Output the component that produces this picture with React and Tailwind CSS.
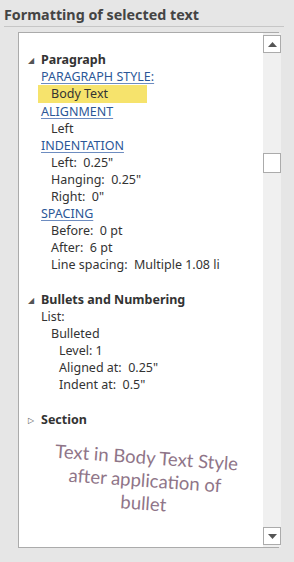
import React from "react";

const L = ({ children }) => (
  <div className="h-[17px] leading-[17px] text-[#2b5797] underline underline-offset-2 decoration-[#6d8cc0]">{children}</div>
);
const T = ({ children, cls = "" }) => (
  <div className={"h-[17px] leading-[17px] whitespace-pre " + cls}>{children}</div>
);
const H = ({ open = true, children }) => (
  <div className="h-[17px] leading-[17px] flex items-center -ml-[13px]">
    <span className="w-[13px] text-[8px] text-[#555] leading-none">{open ? "◢" : "▷"}</span>
    <span className="font-bold text-[#333] text-[12.5px]">{children}</span>
  </div>
);

export default function App() {
  return (
    <div className="w-[294px] h-[562px] bg-[#e6e6e6] overflow-hidden" style={{ fontFamily: '"Noto Sans", "Open Sans", sans-serif' }}>
      <div className="pl-[4px] pt-[5px] w-[284px]">
        <div className="text-[14.3px] font-bold text-[#444] leading-[20px]">Formatting of selected text</div>
        <div className="mt-[1px] h-px bg-[#c6c6c6]" />
      </div>
      <div className="ml-[18px] mt-[5px] w-[261px] h-[516px] border border-[#ababab] bg-white flex">
        <div className="flex-1 pl-[22px] pt-[18px] text-[12.5px] text-[#333]">
          <H>Paragraph</H>
          <L>PARAGRAPH STYLE:</L>
          <div className="-ml-[3px] w-[109px] h-[18px] leading-[18px] bg-[#f6e36c] pl-[13px]">Body Text</div>
          <L>ALIGNMENT</L>
          <T cls="pl-[10px]">Left</T>
          <L>INDENTATION</L>
          <T cls="pl-[10px]">Left:  0.25"</T>
          <T cls="pl-[10px]">Hanging:  0.25"</T>
          <T cls="pl-[10px]">Right:  0"</T>
          <L>SPACING</L>
          <T cls="pl-[10px]">Before:  0 pt</T>
          <T cls="pl-[10px]">After:  6 pt</T>
          <T cls="pl-[10px]">Line spacing:  Multiple 1.08 li</T>
          <div className="h-[18px]" />
          <H>Bullets and Numbering</H>
          <T>List:</T>
          <T cls="pl-[10px]">Bulleted</T>
          <T cls="pl-[18px]">Level: 1</T>
          <T cls="pl-[18px]">Aligned at:  0.25"</T>
          <T cls="pl-[18px]">Indent at:  0.5"</T>
          <div className="h-[18px]" />
          <H open={false}>Section</H>
          <div className="mt-[18px] -ml-[14px] w-[236px] text-center text-[18.5px] leading-[23px] text-[#8f7588] rotate-[4deg]" style={{ fontFamily: 'Lato, "Noto Sans", sans-serif' }}>
            Text in Body Text Style<br />after application of<br />bullet
          </div>
        </div>
        <div className="w-[20px] bg-[#f0f0f0] flex flex-col items-center py-[2px]">
          <div className="w-[18px] h-[18px] border border-[#ababab] bg-white flex items-center justify-center">
            <svg width="9" height="5" viewBox="0 0 9 5"><path d="M0 5 L4.5 0 L9 5 Z" fill="#555" /></svg>
          </div>
          <div className="h-[100px]" />
          <div className="w-[18px] h-[20px] border border-[#ababab] bg-white" />
          <div className="flex-1" />
          <div className="w-[18px] h-[18px] border border-[#ababab] bg-white flex items-center justify-center">
            <svg width="9" height="5" viewBox="0 0 9 5"><path d="M0 0 L4.5 5 L9 0 Z" fill="#555" /></svg>
          </div>
        </div>
      </div>
    </div>
  );
}
